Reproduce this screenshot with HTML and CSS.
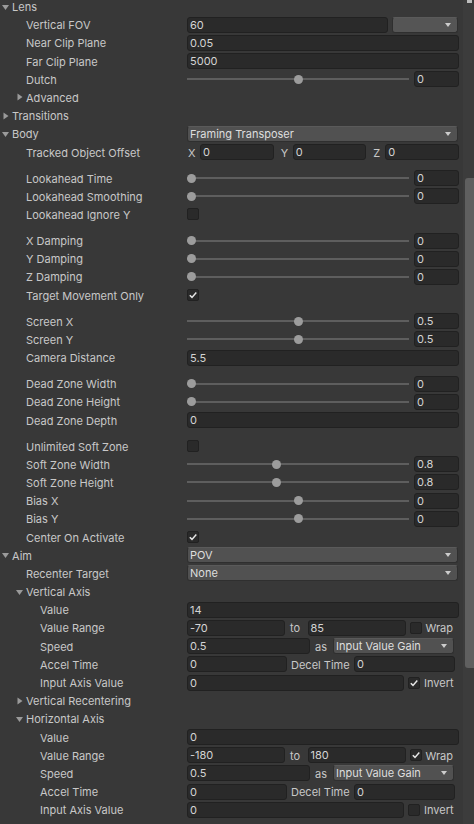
FILE: index.html
```html
<!DOCTYPE html>
<html>
<head>
<meta charset="utf-8">
<link rel="stylesheet" href="styles.css">
</head>
<body>
<div class="inspector">
  <div class="content">
    <div class="row"><div class="label l0"><span class="arrow"><svg viewBox="0 0 10 10"><polygon points="1,3 8,3 4.5,8"/></svg></span>Lens</div></div>
    <div class="row"><div class="label l1">Vertical FOV</div><div class="field"><div class="input w-fov">60</div><div class="dropdown w-fovdd"><span></span><i class="dd"></i></div></div></div>
    <div class="row"><div class="label l1">Near Clip Plane</div><div class="field"><div class="input grow">0.05</div></div></div>
    <div class="row"><div class="label l1">Far Clip Plane</div><div class="field"><div class="input grow">5000</div></div></div>
    <div class="row"><div class="label l1">Dutch</div><div class="field"><div class="slider"><div class="knob" style="left:106.5px"></div></div><div class="input num">0</div></div></div>
    <div class="row"><div class="label l1"><span class="arrow"><svg viewBox="0 0 10 10"><polygon points="2.5,1.5 7.5,5 2.5,8.5"/></svg></span>Advanced</div></div>
    <div class="row"><div class="label l0"><span class="arrow"><svg viewBox="0 0 10 10"><polygon points="2.5,1.5 7.5,5 2.5,8.5"/></svg></span>Transitions</div></div>
    <div class="row"><div class="label l0"><span class="arrow"><svg viewBox="0 0 10 10"><polygon points="1,3 8,3 4.5,8"/></svg></span>Body</div><div class="field"><div class="dropdown grow"><span>Framing Transposer</span><i class="dd"></i></div></div></div>
    <div class="row"><div class="label l1">Tracked Object Offset</div><div class="field vec">
      <div class="comp"><span class="axis">X</span><div class="input grow">0</div></div>
      <div class="comp"><span class="axis">Y</span><div class="input grow">0</div></div>
      <div class="comp"><span class="axis">Z</span><div class="input grow">0</div></div>
    </div></div>
    <div class="gap"></div>
    <div class="row"><div class="label l1">Lookahead Time</div><div class="field"><div class="slider"><div class="knob" style="left:0px"></div></div><div class="input num">0</div></div></div>
    <div class="row"><div class="label l1">Lookahead Smoothing</div><div class="field"><div class="slider"><div class="knob" style="left:0px"></div></div><div class="input num">0</div></div></div>
    <div class="row"><div class="label l1">Lookahead Ignore Y</div><div class="field"><div class="check"></div></div></div>
    <div class="gap"></div>
    <div class="row"><div class="label l1">X Damping</div><div class="field"><div class="slider"><div class="knob" style="left:0px"></div></div><div class="input num">0</div></div></div>
    <div class="row"><div class="label l1">Y Damping</div><div class="field"><div class="slider"><div class="knob" style="left:0px"></div></div><div class="input num">0</div></div></div>
    <div class="row"><div class="label l1">Z Damping</div><div class="field"><div class="slider"><div class="knob" style="left:0px"></div></div><div class="input num">0</div></div></div>
    <div class="row"><div class="label l1">Target Movement Only</div><div class="field"><div class="check"><svg viewBox="0 0 12 12"><path d="M2.8 6.3 L5 8.4 L9.3 3.6"/></svg></div></div></div>
    <div class="gap"></div>
    <div class="row"><div class="label l1">Screen X</div><div class="field"><div class="slider"><div class="knob" style="left:106.5px"></div></div><div class="input num">0.5</div></div></div>
    <div class="row"><div class="label l1">Screen Y</div><div class="field"><div class="slider"><div class="knob" style="left:106.5px"></div></div><div class="input num">0.5</div></div></div>
    <div class="row"><div class="label l1">Camera Distance</div><div class="field"><div class="input grow">5.5</div></div></div>
    <div class="gap"></div>
    <div class="row"><div class="label l1">Dead Zone Width</div><div class="field"><div class="slider"><div class="knob" style="left:0px"></div></div><div class="input num">0</div></div></div>
    <div class="row"><div class="label l1">Dead Zone Height</div><div class="field"><div class="slider"><div class="knob" style="left:0px"></div></div><div class="input num">0</div></div></div>
    <div class="row"><div class="label l1">Dead Zone Depth</div><div class="field"><div class="input grow">0</div></div></div>
    <div class="gap"></div>
    <div class="row"><div class="label l1">Unlimited Soft Zone</div><div class="field"><div class="check"></div></div></div>
    <div class="row"><div class="label l1">Soft Zone Width</div><div class="field"><div class="slider"><div class="knob" style="left:85.2px"></div></div><div class="input num">0.8</div></div></div>
    <div class="row"><div class="label l1">Soft Zone Height</div><div class="field"><div class="slider"><div class="knob" style="left:85.2px"></div></div><div class="input num">0.8</div></div></div>
    <div class="row"><div class="label l1">Bias X</div><div class="field"><div class="slider"><div class="knob" style="left:106.5px"></div></div><div class="input num">0</div></div></div>
    <div class="row"><div class="label l1">Bias Y</div><div class="field"><div class="slider"><div class="knob" style="left:106.5px"></div></div><div class="input num">0</div></div></div>
    <div class="row"><div class="label l1">Center On Activate</div><div class="field"><div class="check"><svg viewBox="0 0 12 12"><path d="M2.8 6.3 L5 8.4 L9.3 3.6"/></svg></div></div></div>
    <div class="row"><div class="label l0"><span class="arrow"><svg viewBox="0 0 10 10"><polygon points="1,3 8,3 4.5,8"/></svg></span>Aim</div><div class="field"><div class="dropdown grow"><span>POV</span><i class="dd"></i></div></div></div>
    <div class="row"><div class="label l1">Recenter Target</div><div class="field"><div class="dropdown grow"><span>None</span><i class="dd"></i></div></div></div>
    <div class="row"><div class="label l1"><span class="arrow"><svg viewBox="0 0 10 10"><polygon points="1,3 8,3 4.5,8"/></svg></span>Vertical Axis</div></div>
    <div class="row"><div class="label l2">Value</div><div class="field"><div class="input grow">14</div></div></div>
    <div class="row"><div class="label l2">Value Range</div><div class="field"><div class="input w-range">-70</div><span class="mid w-to">to</span><div class="input w-range">85</div><div class="check ml"></div><span class="side">Wrap</span></div></div>
    <div class="row"><div class="label l2">Speed</div><div class="field"><div class="input w-speed">0.5</div><span class="mid w-as">as</span><div class="dropdown w-gain"><span>Input Value Gain</span><i class="dd"></i></div></div></div>
    <div class="row"><div class="label l2">Accel Time</div><div class="field"><div class="input w-accel">0</div><span class="mid w-decel">Decel Time</span><div class="input w-decelin">0</div></div></div>
    <div class="row"><div class="label l2">Input Axis Value</div><div class="field"><div class="input w-axis">0</div><div class="check ml"><svg viewBox="0 0 12 12"><path d="M2.8 6.3 L5 8.4 L9.3 3.6"/></svg></div><span class="side">Invert</span></div></div>
    <div class="row"><div class="label l1"><span class="arrow"><svg viewBox="0 0 10 10"><polygon points="2.5,1.5 7.5,5 2.5,8.5"/></svg></span>Vertical Recentering</div></div>
    <div class="row"><div class="label l1"><span class="arrow"><svg viewBox="0 0 10 10"><polygon points="1,3 8,3 4.5,8"/></svg></span>Horizontal Axis</div></div>
    <div class="row"><div class="label l2">Value</div><div class="field"><div class="input grow">0</div></div></div>
    <div class="row"><div class="label l2">Value Range</div><div class="field"><div class="input w-range">-180</div><span class="mid w-to">to</span><div class="input w-range">180</div><div class="check ml"><svg viewBox="0 0 12 12"><path d="M2.8 6.3 L5 8.4 L9.3 3.6"/></svg></div><span class="side">Wrap</span></div></div>
    <div class="row"><div class="label l2">Speed</div><div class="field"><div class="input w-speed">0.5</div><span class="mid w-as">as</span><div class="dropdown w-gain"><span>Input Value Gain</span><i class="dd"></i></div></div></div>
    <div class="row"><div class="label l2">Accel Time</div><div class="field"><div class="input w-accel">0</div><span class="mid w-decel">Decel Time</span><div class="input w-decelin">0</div></div></div>
    <div class="row"><div class="label l2">Input Axis Value</div><div class="field"><div class="input w-axis">0</div><div class="check ml"></div><span class="side">Invert</span></div></div>
  </div>
  <div class="scrollbar">
    <div class="sb-up"></div>
    <div class="thumb"></div>
  </div>
</div>
</body>
</html>
```
FILE: styles.css
```css
html, body {
  margin: 0;
  padding: 0;
  background: #383838;
}
body {
  font-family: Inter, "Noto Sans", "DejaVu Sans", sans-serif;
  font-size: 11px;
  color: #c8c8c8;
  width: 474px;
  height: 824px;
  overflow: hidden;
}
.inspector {
  display: flex;
  height: 824px;
  overflow: hidden;
}
.content {
  width: 463px;
  flex: none;
  margin-top: -2.6px;
}
.row {
  display: flex;
  align-items: center;
  height: 18.2px;
}
.gap {
  height: 7.9px;
}
.label {
  width: 187px;
  flex: none;
  box-sizing: border-box;
  white-space: nowrap;
  display: flex;
  align-items: center;
  line-height: 14px;
  padding-top: 1px;
}
.l0 { padding-left: 12px; }
.l1 { padding-left: 26px; }
.l2 { padding-left: 40px; }
.arrow {
  width: 10px;
  height: 10px;
  margin-left: -11px;
  margin-right: 1px;
  margin-top: -1px;
  display: inline-block;
}
.arrow svg {
  width: 10px;
  height: 10px;
  display: block;
  fill: #9a9a9a;
}
.field {
  width: 272px;
  flex: none;
  display: flex;
  align-items: center;
  height: 16px;
}
.input {
  height: 16px;
  box-sizing: border-box;
  background: #2a2a2a;
  border: 1px solid #212121;
  border-radius: 3px;
  padding: 0 2px;
  color: #d4d4d4;
  line-height: 15px;
  white-space: nowrap;
  overflow: hidden;
  flex: none;
}
.grow { flex: 1 1 auto; }
.dropdown {
  height: 16px;
  box-sizing: border-box;
  background: #515151;
  border: 1px solid #2f2f2f;
  border-top-color: #5a5a5a;
  border-radius: 3px;
  padding: 0 3px 0 2px;
  color: #dedede;
  line-height: 15px;
  display: flex;
  align-items: center;
  justify-content: space-between;
  white-space: nowrap;
  margin-right: 1px;
}
.dropdown span { padding-top: 1px; }
.dd {
  width: 0;
  height: 0;
  border-left: 3.5px solid transparent;
  border-right: 3.5px solid transparent;
  border-top: 4px solid #cccccc;
  margin-right: 3px;
  flex: none;
}
.w-fov { width: 201px; }
.w-fovdd { width: 66px; margin-left: 4px; flex: none; background: #555555; }
.slider {
  position: relative;
  width: 222px;
  height: 16px;
  flex: none;
}
.slider::before {
  content: "";
  position: absolute;
  left: 0;
  right: 0;
  top: 7px;
  height: 2px;
  background: #5e5e5e;
}
.knob {
  position: absolute;
  top: 3.5px;
  width: 9px;
  height: 9px;
  border-radius: 50%;
  background: #9c9c9c;
}
.num {
  width: 45px;
  margin-left: 5px;
}
.vec { gap: 6px; }
.comp {
  flex: 1 1 0;
  display: flex;
  align-items: center;
  min-width: 0;
}
.axis {
  width: 13px;
  flex: none;
  padding-left: 1px;
  padding-top: 1px;
  box-sizing: border-box;
  line-height: 14px;
}
.check {
  width: 12px;
  height: 12px;
  box-sizing: border-box;
  background: #2a2a2a;
  border: 1px solid #212121;
  border-radius: 2px;
  flex: none;
  position: relative;
}
.check svg {
  position: absolute;
  left: -1px;
  top: -1px;
  width: 12px;
  height: 12px;
  fill: none;
  stroke: #e6e6e6;
  stroke-width: 1.5;
}
.ml { margin-left: 4px; }
.side {
  margin-left: 4px;
  white-space: nowrap;
  line-height: 14px;
  padding-top: 1px;
}
.mid {
  flex: none;
  box-sizing: border-box;
  padding-left: 4px;
  padding-top: 1px;
  white-space: nowrap;
  line-height: 14px;
}
.w-range { width: 98px; }
.w-to { width: 22.5px; padding-left: 5px; }
.w-speed { width: 123px; }
.w-as { width: 23px; padding-left: 5px; }
.w-gain { width: 121px; flex: none; }
.w-accel { width: 100px; }
.w-decel { width: 67px; }
.w-decelin { width: 101px; }
.w-axis { width: 217px; }
.scrollbar {
  width: 11px;
  flex: none;
  background: #3c3c3c;
  display: flex;
  flex-direction: column;
  align-items: flex-end;
}
.sb-up {
  width: 5px;
  height: 3px;
  background: #bdbdbd;
  margin-right: 2px;
}
.thumb {
  margin-top: 175px;
  width: 9px;
  height: 490px;
  background: #5f5f5f;
  border-radius: 3px 0 0 3px;
}
```
